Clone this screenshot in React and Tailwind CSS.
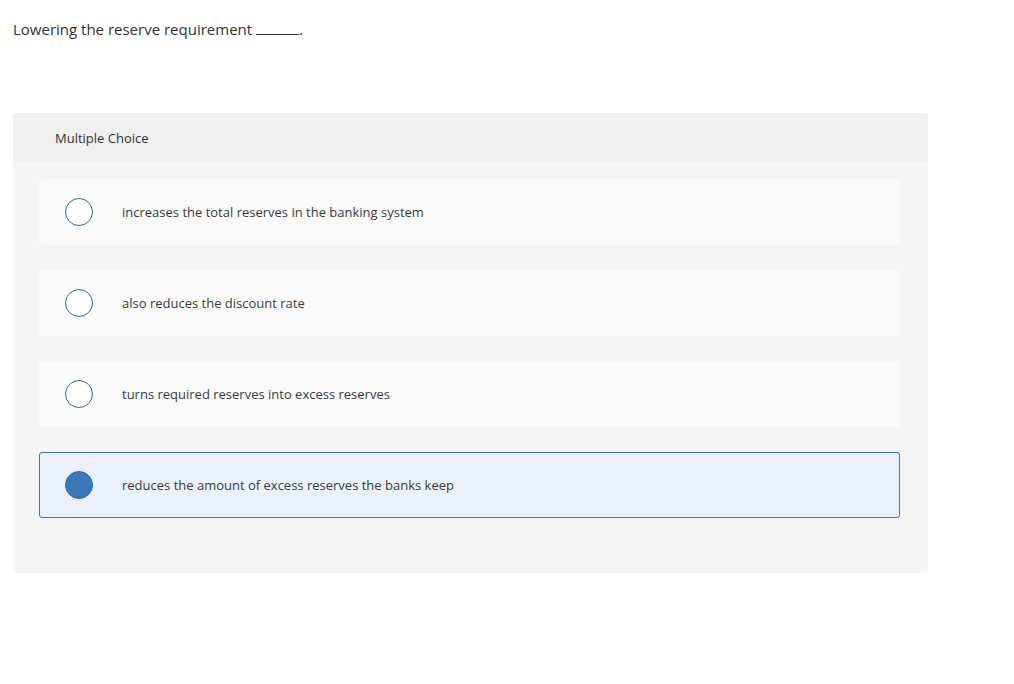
import React from 'react';

const options = [
  { id: 1, text: 'increases the total reserves in the banking system' },
  { id: 2, text: 'also reduces the discount rate' },
  { id: 3, text: 'turns required reserves into excess reserves' },
  { id: 4, text: 'reduces the amount of excess reserves the banks keep' },
];

const App = () => {
  const selected = 4;

  return (
    <div className="min-h-[684px] bg-white text-[#333] font-['Open_Sans',sans-serif]">
      <div className="pt-[19px] pl-[13px] text-[15px] leading-[20px]">
        Lowering the reserve requirement <span className="inline-block w-[43px] border-b border-[#333] align-baseline"></span>.
      </div>

      <div className="mt-[74px] ml-[13px] w-[915px] rounded-[3px] bg-[#f5f5f5] pb-[55px]">
        <div className="h-[49px] rounded-t-[3px] bg-[#f0f0f0] pl-[42px] pt-[16px] text-[13px] leading-[18px] text-[#333]">
          Multiple Choice
        </div>
        <div className="mt-[17px] flex flex-col gap-[25px] pl-[26px]">
          {options.map((opt) => {
            const isSel = opt.id === selected;
            return (
              <div
                key={opt.id}
                className={
                  isSel
                    ? 'flex h-[66px] w-[861px] items-center rounded-[3px] border border-[#3a76b8] bg-[#eaf1fa]'
                    : 'flex h-[66px] w-[861px] items-center rounded-[3px] border border-transparent bg-[#fafafa]'
                }
              >
                <div className="ml-[25px] w-[57px]">
                  {isSel ? (
                    <span className="block h-[28px] w-[28px] rounded-full border border-[#2f66a3] bg-[#3a76b8]"></span>
                  ) : (
                    <span className="block h-[28px] w-[28px] rounded-full border border-[#2f66a3] bg-white"></span>
                  )}
                </div>
                <span className="text-[13px] leading-[18px] text-[#3a3a3a]">{opt.text}</span>
              </div>
            );
          })}
        </div>
      </div>
    </div>
  );
};

export default App;
